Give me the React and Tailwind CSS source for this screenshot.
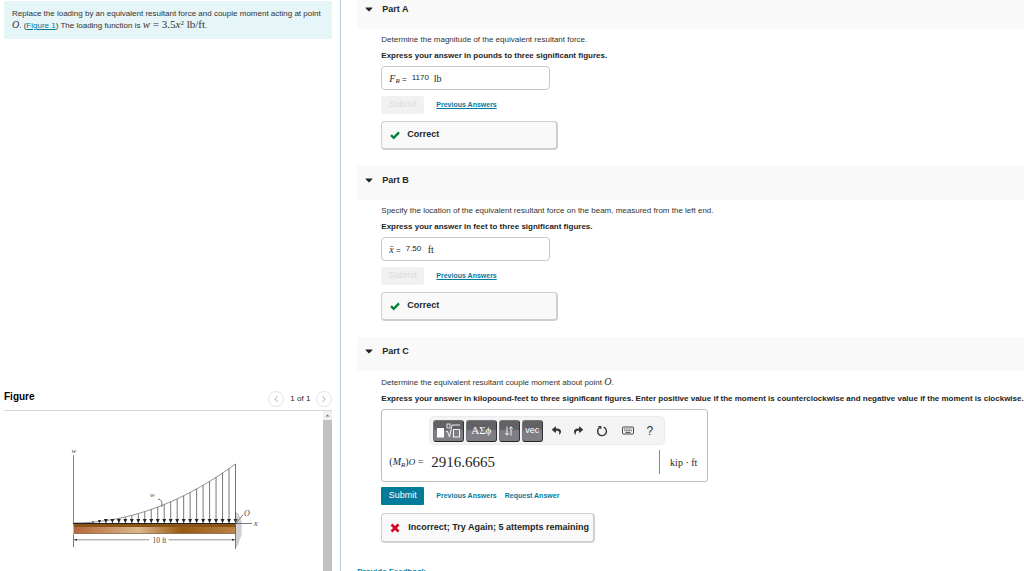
import React, { useState } from 'react';
import { FaCaretDown, FaReply, FaShare } from 'react-icons/fa';
import { ChevronLeft, ChevronRight } from 'lucide-react';

const LINK = 'font-bold text-[#047a9c]';
const SERIF = "font-['Liberation_Serif',serif]";
const TOOL = 'flex h-[22px] items-center justify-center rounded-[3px] border border-t-[#77777b] border-r-[#333] border-b-[#222] border-l-[#77777b] bg-linear-to-b from-[#626266] from-40% to-[#7e7e84] to-50% text-white';

function Part({ title, children }) {
  return (
    <section>
      <h2 className="h-[34px] bg-[#f9f9f9] pt-2 text-[9px] leading-3 font-bold text-[#252525]">
        <button type="button" className="flex items-center pl-2">
          <FaCaretDown className="h-3 w-2" />
          <span className="pl-[9px]">{title}</span>
        </button>
      </h2>
      <div className="pt-[6px] pb-4 pl-6">{children}</div>
    </section>
  );
}

function Prompt({ text, hint }) {
  return (
    <div className="mb-[5px] flex flex-col gap-[6px] text-[8px] leading-[10px] whitespace-nowrap">
      <p className="text-[#333]">{text}</p>
      <p className="font-bold text-[#252525]">{hint}</p>
    </div>
  );
}

function SolvedAnswer({ id, symbol, value, unit }) {
  return (
    <>
      <div className="flex h-6 w-[169px] items-center rounded-[4px] border border-[#c7c7c7] px-[7px] text-[8px] text-[#252525]">
        <label htmlFor={id} className="whitespace-nowrap">{symbol} =</label>
        <input id={id} readOnly defaultValue={value} className="ml-[5px] w-[18px]" />
        <span className={`${SERIF} ml-1 text-[10px]`}>{unit}</span>
      </div>
      <div className="mt-[6px] flex items-center">
        <button type="button" disabled className="h-[18px] w-[43px] rounded-[2px] bg-[#f1f1f1] text-[9px] text-[#dcdcdc]">Submit</button>
        <a href="#previous" className={`${LINK} ml-3 text-[7px] underline`}>Previous Answers</a>
      </div>
      <div className="mt-[7px] flex h-[29px] w-[177px] items-center rounded-[4px] border border-r-2 border-b-2 border-[#cfcfcf] bg-[#f9f9f9] pl-2 text-[9px] font-bold text-[#252525]">
        <svg viewBox="0 0 10 10" className="h-[10px] w-[10px]" fill="none" stroke="#038238" strokeWidth="2.4">
          <path d="M1 5.200L3.700 7.800L9 2.300" />
        </svg>
        <span className="pl-[7px]">Correct</span>
      </div>
    </>
  );
}

function BeamFigure() {
  const left = 73.5;
  const span = 162;
  const base = 523;
  const curve = (t) => base - 59 * t * t;
  const steps = Array.from({ length: 26 }, (_, i) => i / 25);
  const outline = steps.map((t) => `${left + span * t},${curve(t)}`).join(' ');

  return (
    <svg viewBox="66 445 200 107" className="h-[107px] w-[200px] font-['Liberation_Serif',serif]" role="img" aria-label="Beam with distributed load">
      <defs>
        <linearGradient id="wood">
          <stop offset="0" stopColor="#b5653a" />
          <stop offset="0.4" stopColor="#d9b78c" />
          <stop offset="0.67" stopColor="#965a12" />
          <stop offset="1" stopColor="#b98548" />
        </linearGradient>
      </defs>
      <path d="M235.5 512 q4 1 4.500 6 q2.500 3 1.500 10 q1 7 -2 12 q-1 6 -4 8z" fill="#d0d0d2" />
      <path d="M73.500 455V523" stroke="#888" strokeWidth="1" />
      <polyline points={outline} fill="none" stroke="#777" strokeWidth="0.8" />
      {steps.slice(3).map((t) => {
        const x = left + span * t;
        const head = Math.min(4, (t - 0.06) * 30);
        return (
          <g key={t}>
            <path d={`M${x} ${curve(t)}V${base}`} stroke="#555" strokeWidth="0.8" />
            <path d={`M${x - head / 2} ${base - head}h${head}l${-head / 2} ${head}z`} fill="#222" />
          </g>
        );
      })}
      <rect x="73.500" y="523" width="162" height="4" fill="#8a5414" />
      <rect x="73.500" y="527" width="162" height="6.500" fill="url(#wood)" />
      <path d="M73 523.500H236" stroke="#222" strokeWidth="1.200" />
      <path d="M73.500 533.500H235.500" stroke="#6b4420" strokeWidth="0.600" />
      <path d="M235.500 523.500H252M235.500 523.500Q240 519 243 514.500" fill="none" stroke="#555" strokeWidth="0.800" />
      <path d="M158 499Q163 499.500 161.800 507" fill="none" stroke="#555" strokeWidth="0.800" />
      <path d="M73.500 534.500V547M235.500 512V549" stroke="#555" strokeWidth="0.800" />
      <path d="M74 539.800H149M168.500 539.800H235" stroke="#777" strokeWidth="0.800" />
      <path d="M74 539.800l3 -1v2zM235 539.800l-3 -1v2z" fill="#333" />
      <g fill="#444">
        <text x="71.500" y="453" fontSize="7" fontStyle="italic">w</text>
        <text x="150" y="497" fontSize="7" fontStyle="italic">w</text>
        <text x="244" y="516" fontSize="8" fontStyle="italic">O</text>
        <text x="254" y="525.500" fontSize="8" fontStyle="italic">x</text>
        <text x="152.500" y="542.500" fontSize="7.500">10 ft</text>
      </g>
    </svg>
  );
}

function MathToolbar() {
  return (
    <div className="flex h-[29px] w-[236px] items-center rounded-[5px] border border-[#ececec] bg-[#f4f4f4] pl-[3px]">
      <div className="flex gap-[2px]">
        <button type="button" aria-label="Templates" className={`${TOOL} w-[31px]`}>
          <svg viewBox="0 0 25 16" className="h-4 w-[25px]" fill="none" stroke="currentColor">
            <rect x="1" y="5" width="7" height="9.500" fill="currentColor" stroke="none" />
            <path d="M10 8.500l1.500 0l2 5.500l2.500 -12h8" strokeWidth="0.900" />
            <rect x="11" y="1" width="3" height="4" strokeWidth="0.800" />
            <rect x="17.500" y="6.500" width="6" height="7.500" strokeWidth="0.900" />
          </svg>
        </button>
        <button type="button" className={`${TOOL} ${SERIF} w-[31px] text-[11px]`}>ΑΣϕ</button>
        <button type="button" aria-label="Arrows" className={`${TOOL} w-[21px]`}>
          <svg viewBox="0 0 10 12" className="h-3 w-[10px]" fill="none" stroke="currentColor" strokeWidth="0.9">
            <path d="M3 1.500V10M1.200 8.200l1.800 2l1.800 -2M7 10.500V2M5.200 3.800l1.800 -2l1.800 2" />
          </svg>
        </button>
        <button type="button" className={`${TOOL} w-[21px] text-[9px]`}>vec</button>
      </div>
      <div className="flex flex-1 items-center justify-around pr-1 pl-[3px] text-[#333]">
        <button type="button" aria-label="Undo"><FaReply className="h-[9px] w-[9px]" /></button>
        <button type="button" aria-label="Redo"><FaShare className="h-[9px] w-[9px]" /></button>
        <button type="button" aria-label="Reset">
          <svg viewBox="0 0 12 12" className="h-3 w-3" fill="none" stroke="currentColor" strokeWidth="1.400">
            <path d="M7.600 2.100A4.400 4.400 0 1 1 3.800 2.400" />
            <path d="M2 1H5.400V4.400z" fill="currentColor" stroke="none" />
          </svg>
        </button>
        <button type="button" aria-label="Keyboard">
          <svg viewBox="0 0 12 9" className="h-[9px] w-3" fill="none" stroke="currentColor" strokeWidth="0.9">
            <rect x="0.500" y="1" width="11" height="7" rx="0.800" />
            <path d="M2 3H10.200M2.500 4.700H10" strokeDasharray="1 0.600" />
            <path d="M3.500 6.400H8.500" />
          </svg>
        </button>
        <button type="button" className="text-[12px]">?</button>
      </div>
    </div>
  );
}

export default function App() {
  const [moment, setMoment] = useState('2916.6665');

  return (
    <div className="flex h-screen overflow-hidden bg-white font-['Liberation_Sans',Arial,sans-serif]">
      {/* Problem statement and figure */}
      <aside className="flex w-1/3 shrink-0 flex-col border-r border-[#b8cfe0] pr-2 pl-1">
        <div className="mt-[1px] h-[38px] bg-[#e6f5f7] px-2 pt-2 text-[8px] leading-[10px] text-[#333]">
          <p>
            Replace the loading by an equivalent resultant force and couple moment acting at point{' '}
            <i className={`${SERIF} text-[10px] leading-none`}>O</i>. (<a href="#figure" className="text-[#047a9c] underline">Figure 1</a>) The loading function is{' '}
            <span className={`${SERIF} text-[11px] leading-none`}><i>w</i> = 3.5<i>x</i><sup className="text-[7px]">2</sup> lb/ft</span>.
          </p>
        </div>
        <div id="figure" className="mt-auto flex h-6 items-center justify-between border-b border-[#d8d8d8]">
          <h2 className="pb-1 text-[10px] font-bold text-black">Figure</h2>
          <div className="flex items-center gap-[6px] text-[#999]">
            <button type="button" aria-label="Previous figure" className="flex h-4 w-4 items-center justify-center rounded-full border border-[#e6e6e6]">
              <ChevronLeft className="h-[10px] w-[10px]" />
            </button>
            <span className="text-[8px] text-[#252525]">1 of 1</span>
            <button type="button" aria-label="Next figure" className="flex h-4 w-4 items-center justify-center rounded-full border border-[#e6e6e6]">
              <ChevronRight className="h-[10px] w-[10px]" />
            </button>
          </div>
        </div>
        <div className="flex h-40 justify-between">
          <div className="flex flex-1 justify-center pt-[34px] pl-1">
            <BeamFigure />
          </div>
          <div className="flex w-[9px] flex-col bg-[#f1f1f1]">
            <svg viewBox="0 0 9 9" className="h-[9px] w-[9px]"><path d="M2.500 5.500L4.500 3.500L6.500 5.500z" fill="#777" /></svg>
            <div className="flex-1 bg-[#c1c1c1]" />
          </div>
        </div>
      </aside>

      {/* Answer parts */}
      <main className="-mt-[5px] min-w-0 flex-1 pl-4">
        <Part title="Part A">
          <Prompt
            text="Determine the magnitude of the equivalent resultant force."
            hint="Express your answer in pounds to three significant figures."
          />
          <SolvedAnswer
            id="force"
            symbol={<i className={`${SERIF} text-[10px]`}>F<sub className="text-[7px]">R</sub></i>}
            value="1170"
            unit="lb"
          />
        </Part>

        <Part title="Part B">
          <Prompt
            text="Specify the location of the equivalent resultant force on the beam, measured from the left end."
            hint="Express your answer in feet to three significant figures."
          />
          <SolvedAnswer
            id="location"
            symbol={<i className={`${SERIF} text-[10px]`}>x̄</i>}
            value="7.50"
            unit="ft"
          />
        </Part>

        <Part title="Part C">
          <Prompt
            text={<>Determine the equivalent resultant couple moment about point <i className={`${SERIF} text-[10px] leading-none`}>O</i>.</>}
            hint="Express your answer in kilopound-feet to three significant figures. Enter positive value if the moment is counterclockwise and negative value if the moment is clockwise."
          />
          <div className="h-[73px] w-[327px] rounded-[3px] border border-[#bdbdbd] pt-[6px]">
            <div className="flex justify-center pl-1"><MathToolbar /></div>
            <div className={`${SERIF} mt-[5px] flex h-6 items-center pr-[10px] pl-[7px] text-[#252525]`}>
              <label htmlFor="moment" className="text-[10px] whitespace-nowrap">
                (<i>M<sub className="text-[7px]">R</sub></i>)<i className="text-[9px]">O</i> =
              </label>
              <input
                id="moment"
                value={moment}
                onChange={(e) => setMoment(e.target.value)}
                className="ml-2 h-6 min-w-0 flex-1 text-[15px] outline-none"
              />
              <span className="flex h-6 items-center border-l border-[#3aa3bd] pl-[10px] text-[10px]">kip · ft</span>
            </div>
          </div>
          <div className="mt-[5px] flex items-center text-[7px]">
            <button type="button" className="h-[18px] w-[43px] rounded-[1px] bg-[#047a9c] text-[9px] text-white">Submit</button>
            <a href="#previous" className={`${LINK} ml-3`}>Previous Answers</a>
            <a href="#request" className={`${LINK} ml-2`}>Request Answer</a>
          </div>
          <div className="mt-2 flex h-[30px] w-fit items-center rounded-[4px] border border-r-2 border-b-2 border-[#cfcfcf] bg-[#f9f9f9] pr-1 pl-2 text-[9px] font-bold whitespace-nowrap text-[#252525]">
            <svg viewBox="0 0 10 10" className="h-[10px] w-[10px]" fill="none" stroke="#db0020" strokeWidth="2.6">
              <path d="M1.500 1.500L8.500 8.500M8.500 1.500L1.500 8.500" />
            </svg>
            <span className="pl-2">Incorrect; Try Again; 5 attempts remaining</span>
          </div>
        </Part>

        <a href="#feedback" className={`${LINK} mt-2 block text-[8px] leading-[10px]`}>Provide Feedback</a>
      </main>
    </div>
  );
}
